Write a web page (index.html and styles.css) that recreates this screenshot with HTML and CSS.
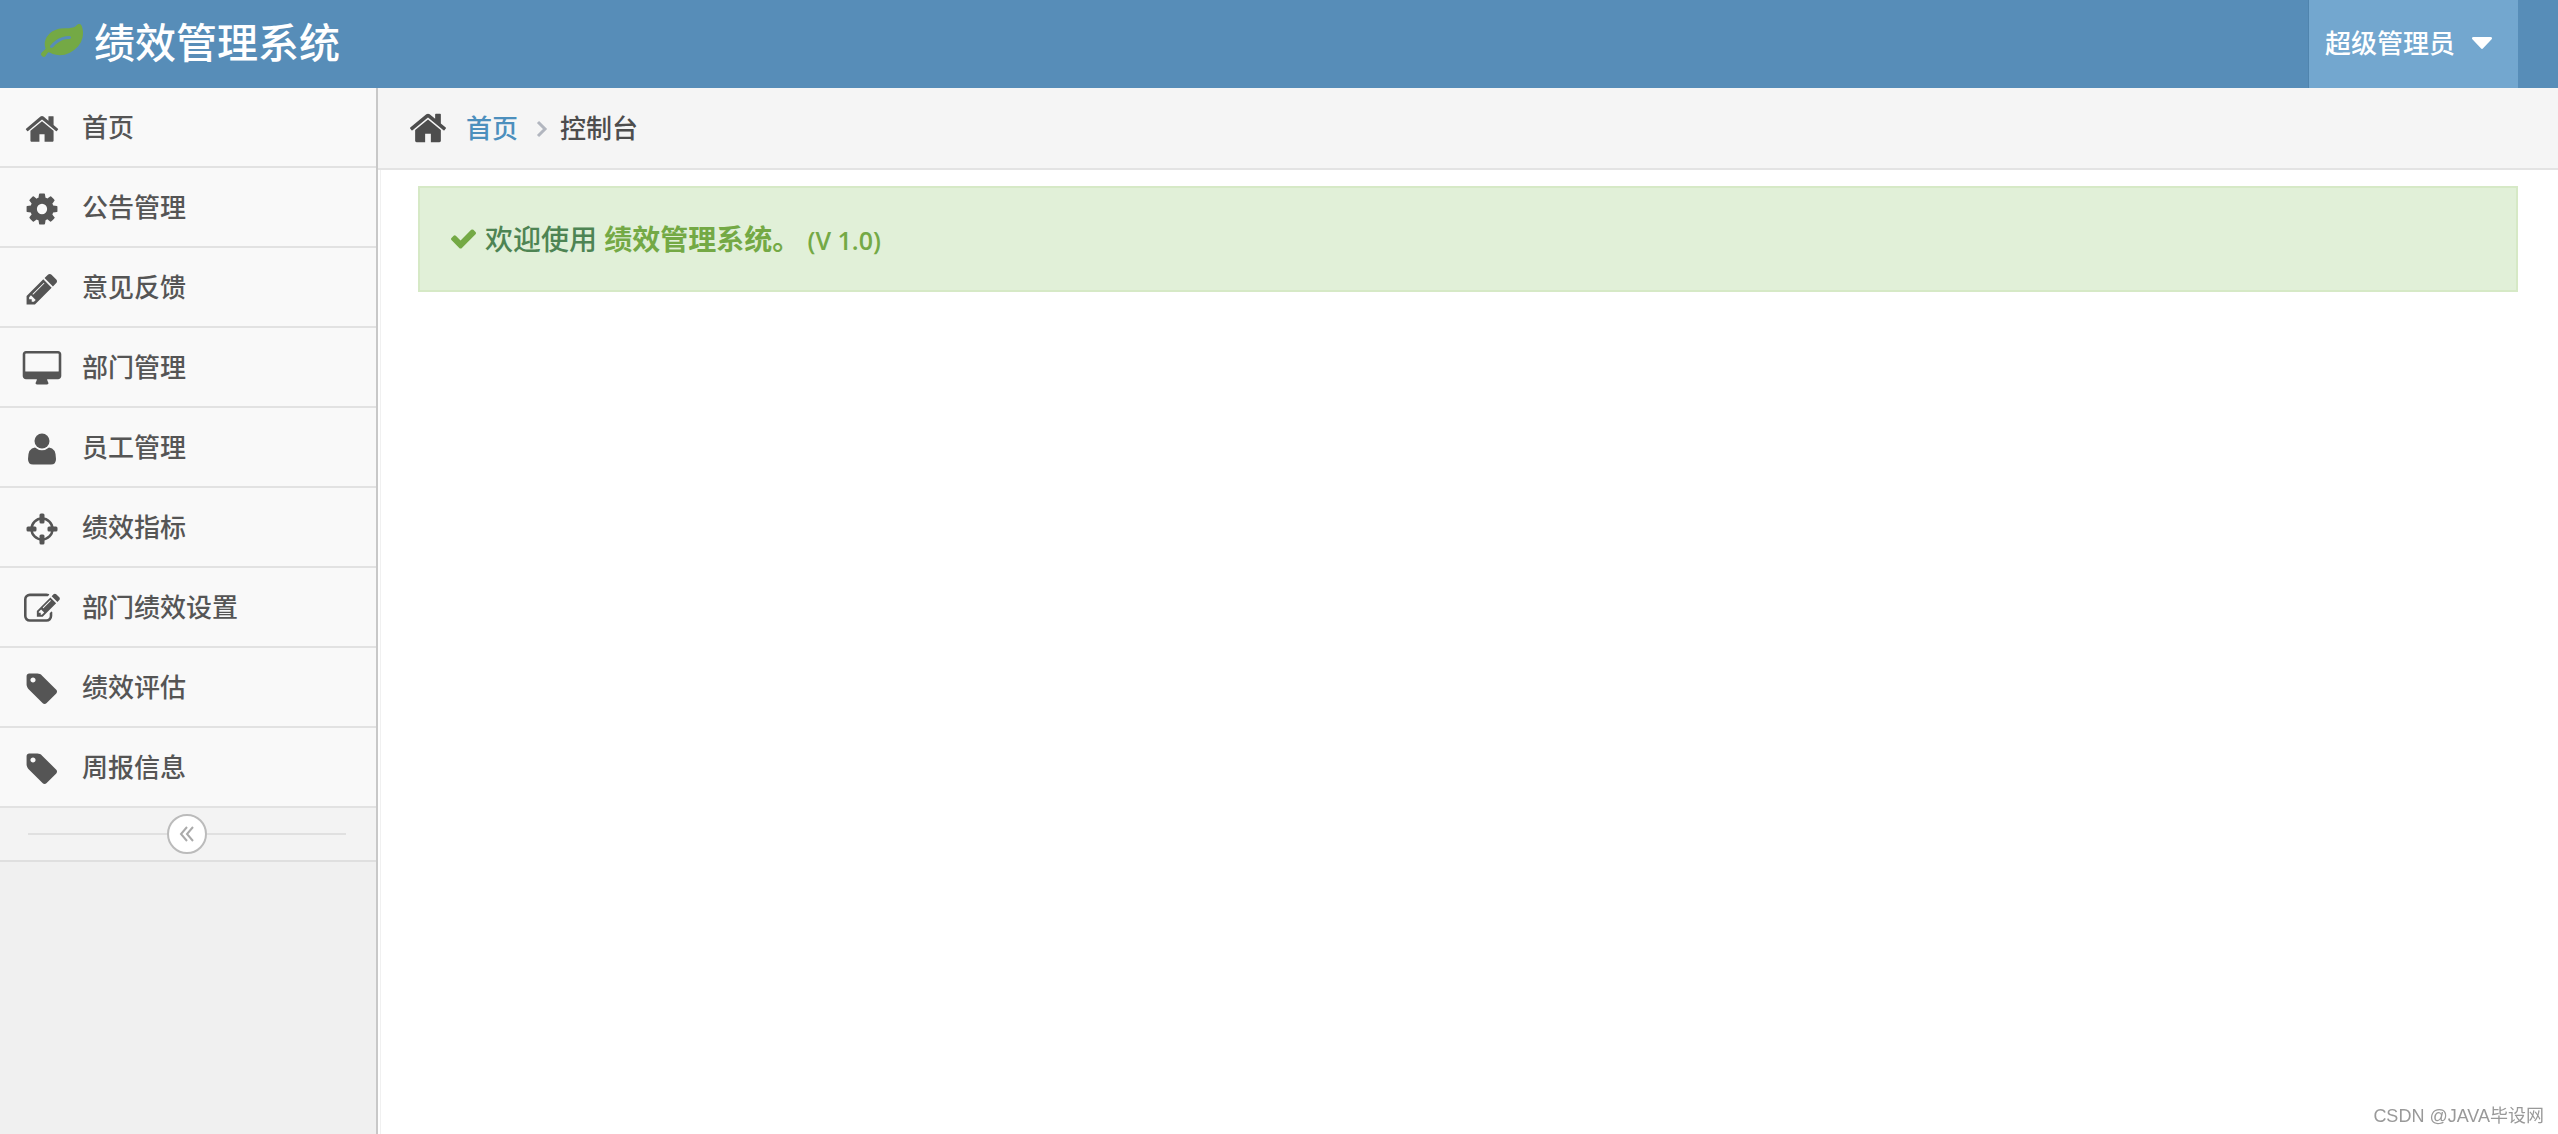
FILE: index.html
```html
<!DOCTYPE html>
<html lang="zh-CN">
  <head>
    <meta charset="UTF-8" />
    <meta name="viewport" content="width=device-width, initial-scale=1.0" />
    <title>绩效管理系统</title>
    <link rel="stylesheet" href="styles.css">
  </head>
  <body>
    <header class="navbar">
      <a class="brand" href="#">
        <svg class="leafIcon" viewBox="0 0 1792 1792"><path d="M1280 704q0-26-19-45t-45-19q-172 0-318 49.5t-259.5 134-235.5 219.5q-19 21-19 45 0 26 19 45t45 19q24 0 45-19 27-24 74-71t67-66q137-124 268.5-176t313.5-52q26 0 45-19t19-45zm512-198q0 95-20 193-46 224-184.5 383t-357.5 268q-214 108-438 108-148 0-286-47-15-5-88-42t-96-37q-16 0-39.5 32t-45 70-52.5 70-60 32q-43 0-63.5-17.5t-45.5-59.5q-2-4-6-11t-5.5-10-3-9.5-1.5-13.5q0-35 31-73.5t68-65.5 68-56 31-48q0-4-14-38t-16-44q-9-51-9-104 0-115 43.5-220t119-184.5 170.5-139 204-95.5q55-18 145-25.5t179.5-9 178.5-6 163.5-24 113.5-56.5l29.5-29.5 29.5-28 27-20 36.5-16 43.5-4.5q39 0 70.5 46t47.5 112 24 124 8 96z"/></svg>
        <span>绩效管理系统</span>
      </a>
      <button type="button" class="user">
        <span>超级管理员</span>
        <svg class="caret" viewBox="0 0 20 12"><path d="M1.500 0h17q1.500 0 1.500 1.200 0 .7-.6 1.300l-8.300 8.800q-.5.700-1.100.700t-1.100-.7L.6 2.500Q0 1.900 0 1.200 0 0 1.500 0z"/></svg>
      </button>
    </header>
    <div class="container">
      <aside class="sidebar">
        <nav class="menu">
          <a href="#">
            <svg class="icon" viewBox="0 0 1792 1792"><path d="M1472 992v480q0 26-19 45t-45 19h-384v-384h-256v384h-384q-26 0-45-19t-19-45v-480q0-1 .5-3t.5-3l575-474 575 474q1 2 1 6zm223-69l-62 74q-8 9-21 11h-3q-13 0-21-7l-692-577-692 577q-12 8-24 7-13-2-21-11l-62-74q-8-10-7-23.5t11-21.5l719-599q32-26 76-26t76 26l244 204v-195q0-14 9-23t23-9h192q14 0 23 9t9 23v408l219 182q10 8 11 21.5t-7 23.5z"/></svg>
            <span>首页</span>
          </a>
          <a href="#">
            <svg class="icon" viewBox="0 0 1792 1792"><path d="M1152 896q0-106-75-181t-181-75-181 75-75 181 75 181 181 75 181-75 75-181zm512-109v222q0 12-8 23t-20 13l-185 28q-19 54-39 91 35 50 107 138 10 12 10 25t-9 23q-27 37-99 108t-94 71q-12 0-26-9l-138-108q-44 23-91 38-16 136-29 186-7 28-36 28h-222q-14 0-24.5-8.500t-11.5-21.5l-28-184q-49-16-90-37l-141 107q-10 9-25 9-14 0-25-11-126-114-165-168-7-10-7-23 0-12 8-23 15-21 51-66.5t54-70.5q-27-50-41-99l-183-27q-13-2-21-12.5t-8-23.5v-222q0-12 8-23t19-13l186-28q14-46 39-92-40-57-107-138-10-12-10-24 0-10 9-23 26-36 98.5-107.5t94.5-71.5q13 0 26 10l138 107q44-23 91-38 16-136 29-186 7-28 36-28h222q14 0 24.5 8.5t11.5 21.5l28 184q49 16 90 37l142-107q9-9 24-9 13 0 25 10 129 119 165 170 7 8 7 22 0 12-8 23-15 21-51 66.5t-54 70.5q26 50 41 98l183 28q13 2 21 12.5t8 23.5z"/></svg>
            <span>公告管理</span>
          </a>
          <a href="#">
            <svg class="icon" viewBox="0 0 1792 1792"><path d="M491 1536l91-91-235-235-91 91v107h128v128h107zm523-928q0-22-22-22-10 0-17 7l-542 542q-7 7-7 17 0 22 22 22 10 0 17-7l542-542q7-7 7-17zm-54-192l416 416-832 832h-416v-416zm683 96q0 53-37 90l-166 166-416-416 166-165q36-38 90-38 53 0 91 38l235 234q37 39 37 91z"/></svg>
            <span>意见反馈</span>
          </a>
          <a href="#">
            <svg class="icon" viewBox="64 0 1792 1792"><path d="M1792 992v-832q0-13-9.5-22.5t-22.5-9.5h-1600q-13 0-22.5 9.5t-9.5 22.5v832q0 13 9.5 22.5t22.5 9.5h1600q13 0 22.5-9.5t9.5-22.5zm128-832v1088q0 66-47 113t-113 47h-544q0 37 16 77.5t32 71 16 43.5q0 26-19 45t-45 19h-512q-26 0-45-19t-19-45q0-14 16-44t32-70 16-78h-544q-66 0-113-47t-47-113v-1088q0-66 47-113t113-47h1600q66 0 113 47t47 113z"/></svg>
            <span>部门管理</span>
          </a>
          <a href="#">
            <svg class="icon" viewBox="0 0 36 36"><circle cx="18" cy="10" r="7.500"/><path d="M11 16.500q3 2.700 7 2.700t7-2.700q7 .5 7 11.500 0 5.500-5 5.500H9q-5 0-5-5.500 0-11 7-11.500z"/></svg>
            <span>员工管理</span>
          </a>
          <a href="#">
            <svg class="icon" viewBox="0 0 36 36"><circle class="ring" cx="18" cy="18" r="10.500"/><path d="M15.500 4q0-1.500 1.500-1.500h2q1.500 0 1.500 1.500v7q0 1.500-1.500 1.500h-2q-1.500 0-1.500-1.500zM15.500 25q0-1.500 1.500-1.500h2q1.500 0 1.500 1.500v7q0 1.500-1.500 1.500h-2q-1.500 0-1.500-1.500zM4 15.500h7q1.500 0 1.500 1.500v2q0 1.500-1.500 1.500H4q-1.500 0-1.500-1.500v-2q0-1.500 1.500-1.500zM25 15.500h7q1.500 0 1.500 1.500v2q0 1.500-1.500 1.500h-7q-1.500 0-1.500-1.500v-2q0-1.500 1.500-1.500z"/></svg>
            <span>绩效指标</span>
          </a>
          <a href="#">
            <svg class="icon" viewBox="0 0 1792 1792"><path d="M888 1184l116-116-152-152-116 116v56h96v96h56zm440-720q-16-16-33 1l-350 350q-17 17-1 33t33-1l350-350q17-17 1-33zm80 594v190q0 119-84.5 203.5t-203.5 84.5h-832q-119 0-203.5-84.5t-84.5-203.5v-832q0-119 84.5-203.5t203.5-84.5h832q63 0 117 25 15 7 18 23 3 17-9 29l-49 49q-14 14-32 8-23-6-45-6h-832q-66 0-113 47t-47 113v832q0 66 47 113t113 47h832q66 0 113-47t47-113v-126q0-13 9-22l64-64q15-15 35-7t20 29zm-96-738l288 288-672 672h-288v-288zm444 132l-92 92-288-288 92-92q28-28 68-28t68 28l152 152q28 28 28 68t-28 68z"/></svg>
            <span>部门绩效设置</span>
          </a>
          <a href="#">
            <svg class="icon" viewBox="0 0 1792 1792"><path d="M576 448q0-53-37.5-90.5t-90.5-37.5-90.5 37.5-37.5 90.5 37.5 90.5 90.5 37.5 90.5-37.5 37.5-90.5zm1067 576q0 53-37 90l-491 492q-39 37-91 37-53 0-90-37l-715-716q-38-37-64.5-101t-26.5-117v-416q0-52 38-90t90-38h416q53 0 117 26.5t102 64.5l715 714q37 39 37 91z"/></svg>
            <span>绩效评估</span>
          </a>
          <a href="#">
            <svg class="icon" viewBox="0 0 1792 1792"><path d="M576 448q0-53-37.5-90.5t-90.5-37.5-90.5 37.5-37.5 90.5 37.5 90.5 90.5 37.5 90.5-37.5 37.5-90.5zm1067 576q0 53-37 90l-491 492q-39 37-91 37-53 0-90-37l-715-716q-38-37-64.5-101t-26.5-117v-416q0-52 38-90t90-38h416q53 0 117 26.5t102 64.5l715 714q37 39 37 91z"/></svg>
            <span>周报信息</span>
          </a>
        </nav>
        <div class="collapse">
          <button type="button" aria-label="收起菜单">
            <svg viewBox="0 0 16 18"><path d="M8 2L2 9l6 7M14 2L8 9l6 7"/></svg>
          </button>
        </div>
      </aside>
      <main class="main">
        <nav class="breadcrumbs">
          <svg class="homeIcon" viewBox="0 0 1792 1792"><path d="M1472 992v480q0 26-19 45t-45 19h-384v-384h-256v384h-384q-26 0-45-19t-19-45v-480q0-1 .5-3t.5-3l575-474 575 474q1 2 1 6zm223-69l-62 74q-8 9-21 11h-3q-13 0-21-7l-692-577-692 577q-12 8-24 7-13-2-21-11l-62-74q-8-10-7-23.5t11-21.5l719-599q32-26 76-26t76 26l244 204v-195q0-14 9-23t23-9h192q14 0 23 9t9 23v408l219 182q10 8 11 21.5t-7 23.5z"/></svg>
          <a href="#">首页</a>
          <svg class="arrow" viewBox="0 0 12 18"><path d="M2 2l7 7-7 7"/></svg>
          <span>控制台</span>
        </nav>
        <div class="content">
          <div class="alert">
            <svg class="checkIcon" viewBox="121 334 1550 1188"><path d="M1671 566q0 40-28 68l-724 724-136 136q-28 28-68 28t-68-28l-136-136-362-362q-28-28-28-68t28-68l136-136q28-28 68-28t68 28l294 295 656-657q28-28 68-28t68 28l136 136q28 28 28 68z"/></svg>
            <p>欢迎使用 <strong>绩效管理系统。 <small>(V 1.0)</small></strong></p>
          </div>
        </div>
      </main>
    </div>
    <div class="watermark">CSDN @JAVA毕设网</div>
  </body>
</html>
```
FILE: styles.css
```css
* {
  box-sizing: border-box;
}
body {
  display: flex;
  flex-direction: column;
  min-height: 100vh;
  margin: 0;
  background: #fff;
  color: #4d4d4d;
  font-family: "Open Sans", "Noto Sans CJK SC", sans-serif;
  font-size: 26px;
  font-weight: 500;
  line-height: 40px;
}
a {
  text-decoration: none;
}
button {
  font: inherit;
  cursor: pointer;
}
svg {
  flex-shrink: 0;
  fill: currentColor;
}
.navbar {
  display: flex;
  justify-content: space-between;
  height: 88px;
  padding: 0 40px;
  background: #578db8;
  color: #fff;
}
.brand {
  display: flex;
  align-items: center;
  gap: 11px;
  padding: 0 0 5px 1px;
  color: #fff;
  font-size: 41px;
}
.leafIcon {
  width: 42px;
  height: 42px;
  color: #74a945;
}
.user {
  display: flex;
  align-items: center;
  gap: 17px;
  padding: 0 26px 2px 16px;
  border: none;
  border-left: 1px solid #5084ad;
  background: #73a7cf;
  color: #fff;
}
.caret {
  width: 20px;
  height: 12px;
}
.container {
  display: flex;
  flex-grow: 1;
}
.sidebar {
  width: 378px;
  flex-shrink: 0;
  border-right: 2px solid #c8c8c8;
  background: #f0f0f0;
}
.menu {
  display: flex;
  flex-direction: column;
}
.menu a {
  display: flex;
  align-items: center;
  gap: 22px;
  height: 80px;
  padding-left: 24px;
  border-bottom: 2px solid #e2e2e2;
  background: #f9f9f9;
  color: #555;
}
.menu a:hover {
  color: #578db8;
}
.icon {
  width: 36px;
  height: 36px;
  margin-top: 4px;
  overflow: visible;
}
.ring {
  fill: none;
  stroke: currentColor;
  stroke-width: 2.5;
}
.collapse {
  display: flex;
  align-items: center;
  height: 54px;
  padding: 0 30px 0 28px;
  border-bottom: 2px solid #dfdfdf;
  background: #f3f3f3;
}
.collapse::before,
.collapse::after {
  content: "";
  flex-grow: 1;
  height: 2px;
  background: #e0e0e0;
}
.collapse button {
  display: flex;
  align-items: center;
  justify-content: center;
  width: 40px;
  height: 40px;
  padding: 0;
  border: 2px solid #bbb;
  border-radius: 50%;
  background: #fff;
  color: #aaa;
}
.collapse svg {
  width: 16px;
  height: 18px;
}
.collapse path,
.arrow path {
  fill: none;
  stroke: currentColor;
  stroke-width: 2;
}
.main {
  display: flex;
  flex-direction: column;
  flex-grow: 1;
}
.breadcrumbs {
  display: flex;
  align-items: center;
  height: 82px;
  padding-left: 30px;
  border-bottom: 2px solid #e3e3e3;
  background: #f5f5f5;
}
.breadcrumbs a {
  margin: 0 18px;
  color: #4c8fbd;
}
.homeIcon {
  width: 40px;
  height: 40px;
}
.arrow {
  width: 12px;
  height: 18px;
  margin: 2px 12px 0 0;
  color: #b2b6bf;
}
.arrow path {
  stroke-width: 3;
}
.content {
  flex-grow: 1;
  margin-left: 2px;
  padding: 16px 40px 40px 37px;
  border-left: 1px solid #f0f0f0;
}
.alert {
  display: flex;
  align-items: center;
  gap: 9px;
  padding: 31px;
  border: 2px solid #d6e9c6;
  background: #e1f0d8;
  color: #4e8453;
  font-size: 28px;
}
.alert p {
  margin: 0;
}
.alert strong,
.checkIcon {
  color: #74a945;
}
.alert small {
  font-size: 25px;
  font-weight: 600;
  line-height: 1;
}
.checkIcon {
  width: 25px;
  height: 20px;
}
.watermark {
  position: fixed;
  right: 14px;
  bottom: 8px;
  color: #999;
  font-family: "Liberation Sans", "Noto Sans CJK SC", sans-serif;
  font-size: 18px;
  font-weight: 400;
  line-height: 20px;
}
```
